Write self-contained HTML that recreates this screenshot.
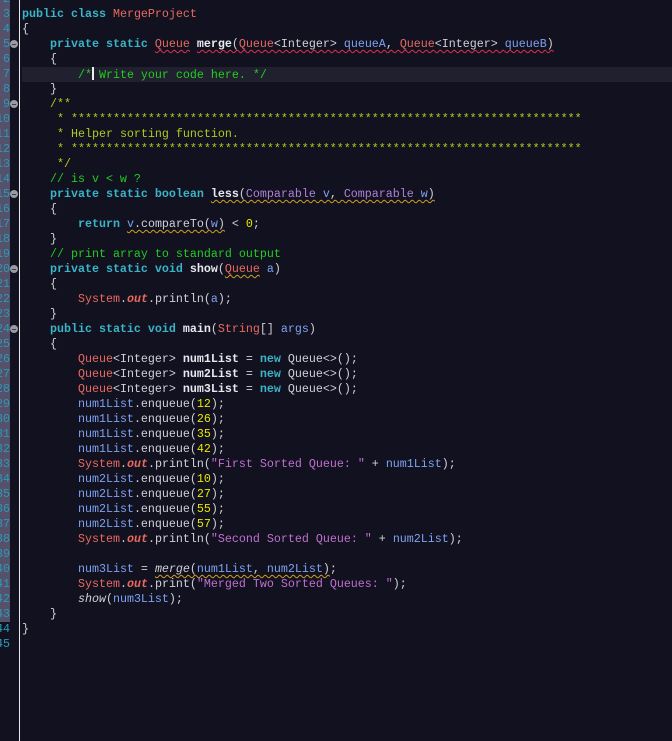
<!DOCTYPE html>
<html><head><meta charset="utf-8"><style>
html,body{margin:0;padding:0}
body{width:672px;height:741px;background:#12111f;overflow:hidden;position:relative;font-family:"Liberation Mono",monospace;font-size:11.67px}
.gut{position:absolute;left:0;top:0;width:10px;height:622px;background:#55516a}
.vl{position:absolute;left:19px;top:0;width:1px;height:741px;background:#e8e8e8}
.n{position:absolute;right:662px;color:#2a9ab8;line-height:15px;height:15px;white-space:pre}
.f{position:absolute;left:10px;width:8px;height:8px;border-radius:50%;background:#9a9aa4}
.f:after{content:"";position:absolute;left:2px;top:3.5px;width:4px;height:1px;background:#40404a}
.l{position:absolute;left:22px;line-height:15px;height:15px;white-space:pre;color:#d0d0d8}
.cur{position:absolute;left:22px;top:67px;width:650px;height:15px;background:#20202e}
.k{color:#3ab4c8}.c{color:#e86a60}.m{color:#e8e8f0}.cm{color:#22cc22}.jd{color:#b0c820}
.num{color:#e8e800}.s{color:#c070d0}.id{color:#7ea2f0}.p{color:#b080d8}.b{color:#d0d0d8}
.it{font-style:italic}.bo{font-weight:bold}
.w{text-decoration:underline wavy #d0a020;text-decoration-thickness:1px;text-underline-offset:2px}
.wr{text-decoration:underline wavy #e03050;text-decoration-thickness:1px;text-underline-offset:2px}
.caret{display:inline-block;width:2px;height:13px;background:#f0f0f0;vertical-align:-2px;margin:0 -2px 0 0}
</style></head><body>
<div class="gut"></div>
<div class="cur"></div>
<div class="vl"></div>
<div class="n" style="top:-8px">2</div><div class="n" style="top:7px">3</div><div class="n" style="top:22px">4</div><div class="n" style="top:37px">5</div><div class="n" style="top:52px">6</div><div class="n" style="top:67px">7</div><div class="n" style="top:82px">8</div><div class="n" style="top:97px">9</div><div class="n" style="top:112px">10</div><div class="n" style="top:127px">11</div><div class="n" style="top:142px">12</div><div class="n" style="top:157px">13</div><div class="n" style="top:172px">14</div><div class="n" style="top:187px">15</div><div class="n" style="top:202px">16</div><div class="n" style="top:217px">17</div><div class="n" style="top:232px">18</div><div class="n" style="top:247px">19</div><div class="n" style="top:262px">20</div><div class="n" style="top:277px">21</div><div class="n" style="top:292px">22</div><div class="n" style="top:307px">23</div><div class="n" style="top:322px">24</div><div class="n" style="top:337px">25</div><div class="n" style="top:352px">26</div><div class="n" style="top:367px">27</div><div class="n" style="top:382px">28</div><div class="n" style="top:397px">29</div><div class="n" style="top:412px">30</div><div class="n" style="top:427px">31</div><div class="n" style="top:442px">32</div><div class="n" style="top:457px">33</div><div class="n" style="top:472px">34</div><div class="n" style="top:487px">35</div><div class="n" style="top:502px">36</div><div class="n" style="top:517px">37</div><div class="n" style="top:532px">38</div><div class="n" style="top:547px">39</div><div class="n" style="top:562px">40</div><div class="n" style="top:577px">41</div><div class="n" style="top:592px">42</div><div class="n" style="top:607px">43</div><div class="n" style="top:622px">44</div><div class="n" style="top:637px">45</div>
<div class="f" style="top:40px"></div><div class="f" style="top:100px"></div><div class="f" style="top:190px"></div><div class="f" style="top:265px"></div><div class="f" style="top:325px"></div>

<div class="l" style="top:7px"><span class="k bo">public class</span> <span class="c">MergeProject</span></div>
<div class="l" style="top:22px">{</div>
<div class="l" style="top:37px">    <span class="k bo">private static</span> <span class="c wr">Queue</span> <span class="m bo wr">merge</span><span class="wr">(<span class="c">Queue</span>&lt;Integer&gt; <span class="id">queueA</span>, <span class="c">Queue</span>&lt;Integer&gt; <span class="id">queueB</span>)</span></div>
<div class="l" style="top:52px">    {</div>
<div class="l" style="top:67px">        <span class="cm">/*<span class="caret"></span> Write your code here. */</span></div>
<div class="l" style="top:82px">    }</div>
<div class="l" style="top:97px">    <span class="jd">/**</span></div>
<div class="l" style="top:112px">     <span class="jd">* *************************************************************************</span></div>
<div class="l" style="top:127px">     <span class="jd">* Helper sorting function.</span></div>
<div class="l" style="top:142px">     <span class="jd">* *************************************************************************</span></div>
<div class="l" style="top:157px">     <span class="jd">*/</span></div>
<div class="l" style="top:172px">    <span class="cm">// is v &lt; w ?</span></div>
<div class="l" style="top:187px">    <span class="k bo">private static boolean</span> <span class="m bo w">less</span><span class="w">(<span class="p">Comparable</span> <span class="id">v</span>, <span class="p">Comparable</span> <span class="id">w</span>)</span></div>
<div class="l" style="top:202px">    {</div>
<div class="l" style="top:217px">        <span class="k bo">return</span> <span class="w"><span class="id">v</span>.compareTo(<span class="id">w</span>)</span> &lt; <span class="num">0</span>;</div>
<div class="l" style="top:232px">    }</div>
<div class="l" style="top:247px">    <span class="cm">// print array to standard output</span></div>
<div class="l" style="top:262px">    <span class="k bo">private static void</span> <span class="m bo">show</span>(<span class="c w">Queue</span> <span class="id">a</span>)</div>
<div class="l" style="top:277px">    {</div>
<div class="l" style="top:292px">        <span class="c">System</span>.<span class="c bo it">out</span>.println(<span class="id">a</span>);</div>
<div class="l" style="top:307px">    }</div>
<div class="l" style="top:322px">    <span class="k bo">public static void</span> <span class="m bo">main</span>(<span class="c">String</span>[] <span class="id">args</span>)</div>
<div class="l" style="top:337px">    {</div>
<div class="l" style="top:352px">        <span class="c">Queue</span>&lt;Integer&gt; <span class="m bo">num1List</span> = <span class="k bo">new</span> Queue&lt;&gt;();</div>
<div class="l" style="top:367px">        <span class="c">Queue</span>&lt;Integer&gt; <span class="m bo">num2List</span> = <span class="k bo">new</span> Queue&lt;&gt;();</div>
<div class="l" style="top:382px">        <span class="c">Queue</span>&lt;Integer&gt; <span class="m bo">num3List</span> = <span class="k bo">new</span> Queue&lt;&gt;();</div>
<div class="l" style="top:397px">        <span class="id">num1List</span>.enqueue(<span class="num">12</span>);</div>
<div class="l" style="top:412px">        <span class="id">num1List</span>.enqueue(<span class="num">26</span>);</div>
<div class="l" style="top:427px">        <span class="id">num1List</span>.enqueue(<span class="num">35</span>);</div>
<div class="l" style="top:442px">        <span class="id">num1List</span>.enqueue(<span class="num">42</span>);</div>
<div class="l" style="top:457px">        <span class="c">System</span>.<span class="c bo it">out</span>.println(<span class="s">"First Sorted Queue: "</span> + <span class="id">num1List</span>);</div>
<div class="l" style="top:472px">        <span class="id">num2List</span>.enqueue(<span class="num">10</span>);</div>
<div class="l" style="top:487px">        <span class="id">num2List</span>.enqueue(<span class="num">27</span>);</div>
<div class="l" style="top:502px">        <span class="id">num2List</span>.enqueue(<span class="num">55</span>);</div>
<div class="l" style="top:517px">        <span class="id">num2List</span>.enqueue(<span class="num">57</span>);</div>
<div class="l" style="top:532px">        <span class="c">System</span>.<span class="c bo it">out</span>.println(<span class="s">"Second Sorted Queue: "</span> + <span class="id">num2List</span>);</div>
<div class="l" style="top:562px">        <span class="id">num3List</span> = <span class="w"><span class="it">merge</span>(<span class="id">num1List</span>, <span class="id">num2List</span>)</span>;</div>
<div class="l" style="top:577px">        <span class="c">System</span>.<span class="c bo it">out</span>.print(<span class="s">"Merged Two Sorted Queues: "</span>);</div>
<div class="l" style="top:592px">        <span class="it">show</span>(<span class="id">num3List</span>);</div>
<div class="l" style="top:607px">    }</div>
<div class="l" style="top:622px">}</div>
</body></html>
